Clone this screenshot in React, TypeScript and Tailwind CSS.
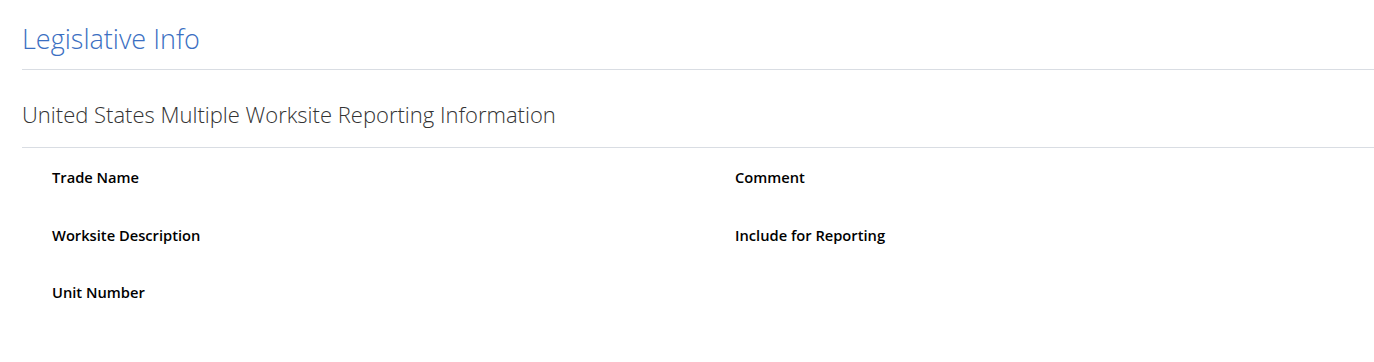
import React from 'react';

const fields: [string, string | null][] = [
  ['Trade Name', 'Comment'],
  ['Worksite Description', 'Include for Reporting'],
  ['Unit Number', null],
];

export default function App() {
  return (
    <div className="min-h-[362px] bg-white pl-[22px] font-['Open_Sans',sans-serif]">
      <div className="flex h-[70px] items-end border-b border-[#d9dde3] pb-[17px]">
        <h1 className="text-[27px] font-light leading-none text-[#3b6fc2]">Legislative Info</h1>
      </div>
      <div className="flex h-[78px] items-end border-b border-[#d9dde3] pb-[22px]">
        <h2 className="text-[22px] font-light leading-none text-[#333333]">
          United States Multiple Worksite Reporting Information
        </h2>
      </div>
      <div className="grid grid-cols-[683px_1fr] pl-[30px] pt-[19px]">
        {fields.map(([left, right]) => (
          <React.Fragment key={left}>
            <div className="h-[57.5px] text-[14.7px] font-semibold leading-5 text-black">{left}</div>
            <div className="h-[57.5px] text-[14.7px] font-semibold leading-5 text-black">{right}</div>
          </React.Fragment>
        ))}
      </div>
    </div>
  );
}
